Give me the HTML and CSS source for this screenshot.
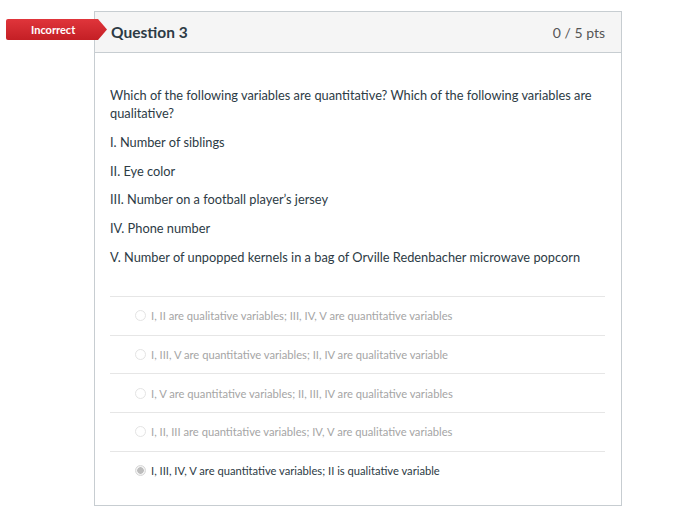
FILE: index.html
```html
<!DOCTYPE html>
<html>
<head>
<meta charset="utf-8">
<link rel="stylesheet" href="styles.css">
</head>
<body>
<div class="wrap">
  <div class="badge">Incorrect</div>
  <div class="card">
    <div class="card-head">
      <span class="qtitle">Question 3</span>
      <span class="pts">0 / 5 pts</span>
    </div>
    <div class="card-body">
      <p>Which of the following variables are quantitative? Which of the following variables are qualitative?</p>
      <p>I. Number of siblings</p>
      <p>II. Eye color</p>
      <p>III. Number on a football player’s jersey</p>
      <p>IV. Phone number</p>
      <p>V. Number of unpopped kernels in a bag of Orville Redenbacher microwave popcorn</p>
      <div class="answers">
        <div class="answer"><span class="radio"></span><span>I, II are qualitative variables; III, IV, V are quantitative variables</span></div>
        <div class="answer"><span class="radio"></span><span>I, III, V are quantitative variables; II, IV are qualitative variable</span></div>
        <div class="answer"><span class="radio"></span><span>I, V are quantitative variables; II, III, IV are qualitative variables</span></div>
        <div class="answer"><span class="radio"></span><span>I, II, III are quantitative variables; IV, V are qualitative variables</span></div>
        <div class="answer selected"><span class="radio"></span><span>I, III, IV, V are quantitative variables; II is qualitative variable</span></div>
      </div>
    </div>
  </div>
</div>
</body>
</html>
```
FILE: styles.css
```css
* { box-sizing: border-box; }
html, body { margin: 0; padding: 0; background: #fff; }
body { font-family: Lato, "Open Sans", sans-serif; color: #2d3b45; }
.wrap { position: relative; padding: 11px 0 0 94px; width: 700px; height: 511px; }
.badge {
  position: absolute; left: 6px; top: 19px; width: 101px; height: 21px;
  background: linear-gradient(#e0353b, #c41f25);
  color: #fff; font-size: 11px; font-weight: bold; line-height: 21px;
  padding-left: 25px;
  clip-path: polygon(0 0, 92px 0, 101px 50%, 92px 100%, 0 100%);
  border-radius: 2px 0 0 2px;
  z-index: 2;
}
.card { width: 528px; height: 495px; border: 1px solid #c7cdd1; }
.card-head {
  height: 41px; background: #f5f5f5; border-bottom: 1px solid #c7cdd1;
  display: flex; align-items: center; justify-content: space-between;
  padding: 0 16px 0 16px;
}
.qtitle { font-size: 15.5px; font-weight: bold; color: #2d3b45; }
.pts { font-size: 14px; color: #555; }
.card-body { padding: 33px 16px 0 15px; }
.card-body p { margin: 0 0 10.75px; font-size: 12.8px; line-height: 18px; color: #2d3b45; }
.answers { margin-top: 30px; }
.answer {
  border-top: 1px solid #e6e6e6; height: 38.75px;
  display: flex; align-items: center; padding-left: 25px; padding-top: 0;
  font-size: 11.2px; color: #a5a5a5;
}
.radio {
  width: 11px; height: 11px; border-radius: 50%; border: 1px solid #e4e4e4;
  margin-right: 5px; display: inline-block; background: #fff;
}
.selected { color: #2d3b45; }
.selected .radio { border-color: #d8d8d8; background: radial-gradient(circle, #bdbdbd 0 3px, #f2f2f2 3.5px); }
```
